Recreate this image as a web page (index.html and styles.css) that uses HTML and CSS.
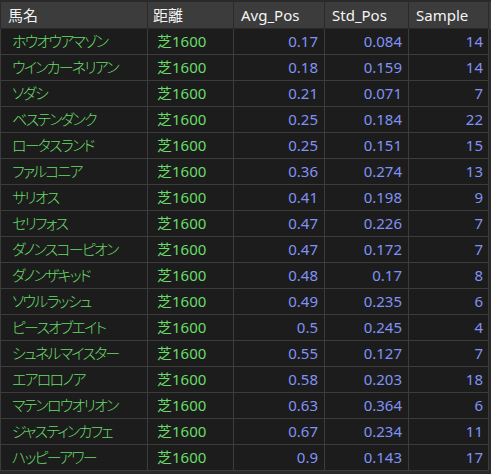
FILE: index.html
```html
<!DOCTYPE html>
<html lang="ja">
<head>
<meta charset="utf-8">
<link rel="stylesheet" href="styles.css">
</head>
<body>
<div class="grid">
  <div class="row head">
    <div class="c c1">馬名</div><div class="c c2">距離</div><div class="c c3">Avg_Pos</div><div class="c c4">Std_Pos</div><div class="c c5">Sample</div><div class="fill"></div>
  </div>
  <div class="row"><div class="c c1 g">ホウオウアマゾン</div><div class="c c2 g">芝1600</div><div class="c c3 n">0.17</div><div class="c c4 n">0.084</div><div class="c c5 n">14</div><div class="fill"></div></div>
  <div class="row"><div class="c c1 g">ウインカーネリアン</div><div class="c c2 g">芝1600</div><div class="c c3 n">0.18</div><div class="c c4 n">0.159</div><div class="c c5 n">14</div><div class="fill"></div></div>
  <div class="row"><div class="c c1 g">ソダシ</div><div class="c c2 g">芝1600</div><div class="c c3 n">0.21</div><div class="c c4 n">0.071</div><div class="c c5 n">7</div><div class="fill"></div></div>
  <div class="row"><div class="c c1 g">ベステンダンク</div><div class="c c2 g">芝1600</div><div class="c c3 n">0.25</div><div class="c c4 n">0.184</div><div class="c c5 n">22</div><div class="fill"></div></div>
  <div class="row"><div class="c c1 g">ロータスランド</div><div class="c c2 g">芝1600</div><div class="c c3 n">0.25</div><div class="c c4 n">0.151</div><div class="c c5 n">15</div><div class="fill"></div></div>
  <div class="row"><div class="c c1 g">ファルコニア</div><div class="c c2 g">芝1600</div><div class="c c3 n">0.36</div><div class="c c4 n">0.274</div><div class="c c5 n">13</div><div class="fill"></div></div>
  <div class="row"><div class="c c1 g">サリオス</div><div class="c c2 g">芝1600</div><div class="c c3 n">0.41</div><div class="c c4 n">0.198</div><div class="c c5 n">9</div><div class="fill"></div></div>
  <div class="row"><div class="c c1 g">セリフォス</div><div class="c c2 g">芝1600</div><div class="c c3 n">0.47</div><div class="c c4 n">0.226</div><div class="c c5 n">7</div><div class="fill"></div></div>
  <div class="row"><div class="c c1 g">ダノンスコーピオン</div><div class="c c2 g">芝1600</div><div class="c c3 n">0.47</div><div class="c c4 n">0.172</div><div class="c c5 n">7</div><div class="fill"></div></div>
  <div class="row"><div class="c c1 g">ダノンザキッド</div><div class="c c2 g">芝1600</div><div class="c c3 n">0.48</div><div class="c c4 n">0.17</div><div class="c c5 n">8</div><div class="fill"></div></div>
  <div class="row"><div class="c c1 g">ソウルラッシュ</div><div class="c c2 g">芝1600</div><div class="c c3 n">0.49</div><div class="c c4 n">0.235</div><div class="c c5 n">6</div><div class="fill"></div></div>
  <div class="row"><div class="c c1 g">ピースオブエイト</div><div class="c c2 g">芝1600</div><div class="c c3 n">0.5</div><div class="c c4 n">0.245</div><div class="c c5 n">4</div><div class="fill"></div></div>
  <div class="row"><div class="c c1 g">シュネルマイスター</div><div class="c c2 g">芝1600</div><div class="c c3 n">0.55</div><div class="c c4 n">0.127</div><div class="c c5 n">7</div><div class="fill"></div></div>
  <div class="row"><div class="c c1 g">エアロロノア</div><div class="c c2 g">芝1600</div><div class="c c3 n">0.58</div><div class="c c4 n">0.203</div><div class="c c5 n">18</div><div class="fill"></div></div>
  <div class="row"><div class="c c1 g">マテンロウオリオン</div><div class="c c2 g">芝1600</div><div class="c c3 n">0.63</div><div class="c c4 n">0.364</div><div class="c c5 n">6</div><div class="fill"></div></div>
  <div class="row"><div class="c c1 g">ジャスティンカフェ</div><div class="c c2 g">芝1600</div><div class="c c3 n">0.67</div><div class="c c4 n">0.234</div><div class="c c5 n">11</div><div class="fill"></div></div>
  <div class="row"><div class="c c1 g">ハッピーアワー</div><div class="c c2 g">芝1600</div><div class="c c3 n">0.9</div><div class="c c4 n">0.143</div><div class="c c5 n">17</div><div class="fill"></div></div>
</div>
</body>
</html>
```
FILE: styles.css
```css
html, body {
  margin: 0;
  padding: 0;
  background: #2a2a2a;
  width: 491px;
  height: 474px;
  overflow: hidden;
}
.grid {
  display: flex;
  flex-direction: column;
  font-family: "Noto Sans", "Noto Sans CJK JP", sans-serif;
  font-size: 15px;
  font-feature-settings: "palt";
}
.row {
  display: flex;
  height: 26px;
  background: #1c1c1c;
}
.c {
  box-sizing: border-box;
  height: 26px;
  border-right: 1px solid #3c3c3c;
  border-bottom: 1px solid #3c3c3c;
  display: flex;
  align-items: center;
  white-space: nowrap;
  overflow: hidden;
  line-height: 1;
}
.c1 { width: 148px; border-left: 1px solid #3c3c3c; padding-left: 11px; }
.c1.g { letter-spacing: -1.8px; font-weight: 300; }
.c2 { width: 86px; padding-left: 9px; }
.c3 { width: 91px; }
.c4 { width: 84px; }
.c5 { width: 80px; }
.fill {
  flex: 1;
  background: #2a2a2a;
}
.g { color: #68dc68; }
.n { color: #8092f6; justify-content: flex-end; padding-right: 6px; }
.c5.n { padding-right: 5px; }
.head { height: 29px; background: #3c3c3c; }
.head .c {
  height: 29px;
  background: #3c3c3c;
  color: #f4f4f4;
  border-top: 2px solid #2a2a2a;
  border-right: 1px solid #2a2a2a;
  border-bottom: 1px solid #2a2a2a;
  padding-left: 7px;
}
.head .c1 { border-left: 1px solid #2a2a2a; }
.head .c2 { padding-left: 5px; }
.head .fill { background: #3c3c3c; border-top: 2px solid #2a2a2a; }
```
